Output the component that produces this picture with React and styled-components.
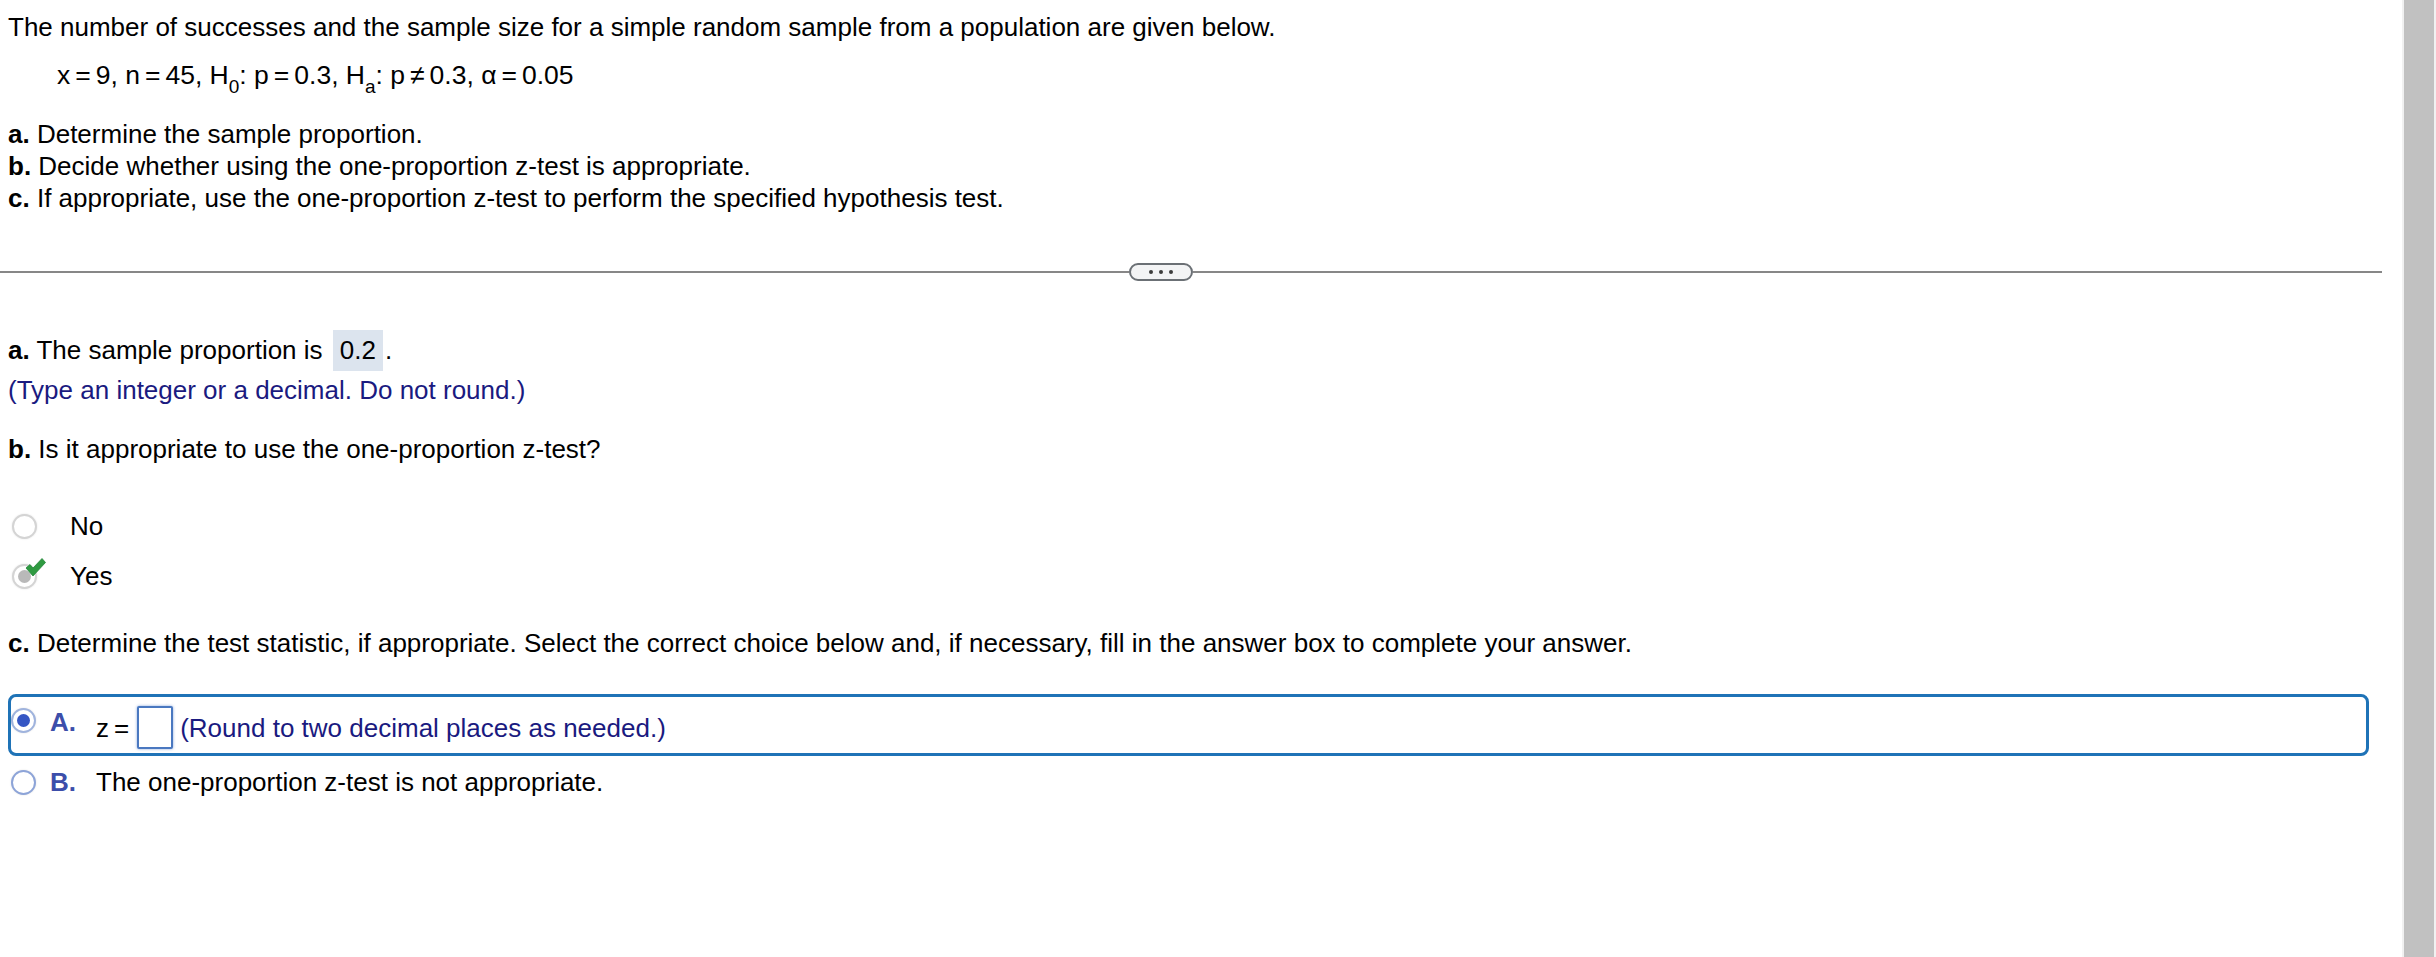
import React from 'react';
import styled, { createGlobalStyle } from 'styled-components';

const GlobalStyle = createGlobalStyle`
  html, body {
    margin: 0;
    padding: 0;
    background: #fff;
    overflow: hidden;
  }
  body {
    font-family: "Liberation Sans", Arial, sans-serif;
    font-size: 26px;
    color: #000;
  }
`;

const Page = styled.div`
  display: flex;
  height: 100vh;
`;

const Main = styled.main`
  flex: 1;
  min-width: 0;
  padding: 11px 0 0 8px;
  line-height: 32px;
`;

const Scrollbar = styled.div`
  width: 34px;
  display: flex;
  background: #f1f1f1;
`;

const Thumb = styled.div`
  flex: 1;
  margin: 0 2px;
  background: #c1c1c1;
`;

const Para = styled.p`
  margin: ${(p) => p.$mt || 0}px 0 0;
`;

const Hint = styled(Para)`
  color: #1a1a80;
`;

const MathLine = styled.div`
  margin: 16px 0 0 49px;
  font-size: 26.5px;
  line-height: 33px;
`;

const Op = styled.span`
  margin: ${(p) => p.$m || '0 5px'};
`;

const Sub = styled.span`
  position: relative;
  top: 9px;
  font-size: 19px;
  line-height: 0;
`;

const Tasks = styled.div`
  margin-top: 26px;
`;

const Bold = styled.b`
  font-weight: bold;
`;

const Divider = styled.div`
  display: flex;
  align-items: center;
  height: 18px;
  margin: 49px 20px 0 -8px;
`;

const Rule = styled.div`
  height: 2px;
  background: #878787;
  flex: ${(p) => (p.$w ? `0 0 ${p.$w}px` : '1')};
`;

const MoreButton = styled.div`
  box-sizing: border-box;
  width: 64px;
  height: 18px;
  border: 2px solid #6b7075;
  border-radius: 9px;
  background: #f3f4f5;
  display: flex;
  align-items: center;
  justify-content: center;
  gap: 6px;
`;

const Dot = styled.span`
  width: 4px;
  height: 4px;
  border-radius: 50%;
  background: #3d3d3d;
`;

const AnswerLine = styled.p`
  margin: 49px 0 0;
`;

const Filled = styled.span`
  display: inline-block;
  line-height: 41px;
  padding: 0 7px;
  margin: 0 2px 0 3px;
  background: #dce4ee;
`;

const Options = styled.div`
  margin-top: 45px;
  display: flex;
  flex-direction: column;
  gap: 18px;
`;

const OptionRow = styled.label`
  display: flex;
  align-items: center;
  height: 32px;
  padding-left: 4px;
`;

const RadioWrap = styled.span`
  position: relative;
  display: inline-flex;
  flex-shrink: 0;
  margin: ${(p) => p.$m || 0};
`;

const Radio = styled.span`
  box-sizing: border-box;
  width: 25px;
  height: 25px;
  border-radius: 50%;
  border: 2px solid ${(p) => p.$ring};
  background: #fff;
  display: flex;
  align-items: center;
  justify-content: center;
  box-shadow: 0 0 2px rgba(0, 0, 0, 0.12);

  &::after {
    content: '';
    width: 13px;
    height: 13px;
    border-radius: 50%;
    background: ${(p) => p.$dot || 'transparent'};
  }
`;

const Check = styled.svg`
  position: absolute;
  left: 13px;
  top: -6px;
`;

const OptionText = styled.span`
  margin-left: 33px;
`;

const Choices = styled.div`
  margin: 38px 36px 0 3px;
  display: flex;
  flex-direction: column;
  gap: 13px;
`;

const ChoiceRow = styled.div`
  display: flex;
  align-items: ${(p) => (p.$selected ? 'flex-start' : 'center')};
  height: ${(p) => (p.$selected ? '56px' : '32px')};
  border-radius: 5px;
  outline: ${(p) => (p.$selected ? '3px solid #1f73b7' : 'none')};
`;

const ChoiceLabel = styled.span`
  font-weight: bold;
  color: #3c4eaa;
  min-width: 46px;
  margin: ${(p) => (p.$selected ? '9px 0 0 14px' : '0 0 0 14px')};
`;

const AnswerGroup = styled.span`
  display: flex;
  align-items: center;
  height: 43px;
  margin-top: 9px;
`;

const Eq = styled.span`
  margin-right: 8px;
`;

const InputBox = styled.span`
  box-sizing: border-box;
  width: 36px;
  height: 43px;
  border: 2px solid #4a78c0;
  border-radius: 2px;
  background: #fff;
  box-shadow: 0 0 3px rgba(60, 110, 200, 0.6);
  margin-right: 7px;
`;

const Navy = styled.span`
  color: #1a1a80;
`;

const Checkmark = () => (
  <Check width="21" height="20" viewBox="0 0 21 20">
    <polygon points="1,10 5,6.5 8,10 17,0.5 20.5,4.5 8,18" fill="#2f9a41" stroke="#23863a" strokeWidth="0.8" />
  </Check>
);

export default function App() {
  return (
    <Page>
      <GlobalStyle />
      <Main>
        <Para>
          The number of successes and the sample size for a simple random sample from a population are given below.
        </Para>
        <MathLine>
          x<Op>=</Op>9, n<Op>=</Op>45, H<Sub>0</Sub>: p<Op>=</Op>0.3, H<Sub>a</Sub>: p<Op>≠</Op>0.3, α<Op>=</Op>0.05
        </MathLine>
        <Tasks>
          <Para><Bold>a.</Bold> Determine the sample proportion.</Para>
          <Para><Bold>b.</Bold> Decide whether using the one-proportion z-test is appropriate.</Para>
          <Para><Bold>c.</Bold> If appropriate, use the one-proportion z-test to perform the specified hypothesis test.</Para>
        </Tasks>

        <Divider>
          <Rule $w={1129} />
          <MoreButton>
            <Dot />
            <Dot />
            <Dot />
          </MoreButton>
          <Rule />
        </Divider>

        <AnswerLine>
          <Bold>a.</Bold> The sample proportion is <Filled>0.2</Filled>.
        </AnswerLine>
        <Hint $mt={3}>(Type an integer or a decimal. Do not round.)</Hint>
        <Para $mt={27}><Bold>b.</Bold> Is it appropriate to use the one-proportion z-test?</Para>

        <Options>
          <OptionRow>
            <RadioWrap>
              <Radio $ring="#d4d4d4" />
            </RadioWrap>
            <OptionText>No</OptionText>
          </OptionRow>
          <OptionRow>
            <RadioWrap>
              <Radio $ring="#d4d4d4" $dot="#b9b9b9" />
              <Checkmark />
            </RadioWrap>
            <OptionText>Yes</OptionText>
          </OptionRow>
        </Options>

        <Para $mt={35}>
          <Bold>c.</Bold> Determine the test statistic, if appropriate. Select the correct choice below and, if necessary, fill in the answer box to complete your answer.
        </Para>

        <Choices>
          <ChoiceRow $selected>
            <RadioWrap $m="11px 0 0 0">
              <Radio $ring="#9fb3dd" $dot="#3556c4" />
            </RadioWrap>
            <ChoiceLabel $selected>A.</ChoiceLabel>
            <AnswerGroup>
              <Eq>z<Op $m="0 0 0 5px">=</Op></Eq>
              <InputBox />
              <Navy>(Round to two decimal places as needed.)</Navy>
            </AnswerGroup>
          </ChoiceRow>
          <ChoiceRow>
            <RadioWrap>
              <Radio $ring="#8da4d8" />
            </RadioWrap>
            <ChoiceLabel>B.</ChoiceLabel>
            <span>The one-proportion z-test is not appropriate.</span>
          </ChoiceRow>
        </Choices>
      </Main>
      <Scrollbar>
        <Thumb />
      </Scrollbar>
    </Page>
  );
}
